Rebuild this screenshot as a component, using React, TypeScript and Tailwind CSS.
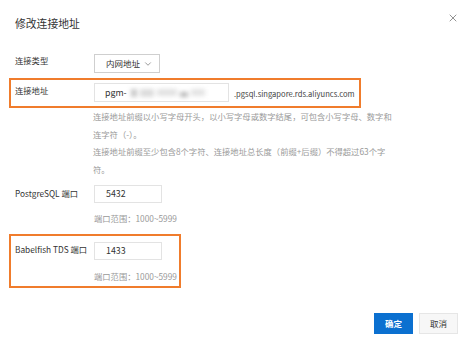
import { ChevronDown, X } from 'lucide-react';

const font = { fontFamily: '"Noto Sans CJK SC", "Noto Sans", sans-serif' };

function Field({ value, className = '' }: { value: string; className?: string }) {
  return (
    <div className={`flex h-[18px] w-[68px] items-center border border-[#e3e3e3] pl-[11px] text-[8.8px] text-[#333] ${className}`}>
      {value}
    </div>
  );
}

export default function App() {
  return (
    <div className="relative h-[350px] w-[474px] overflow-hidden bg-white" style={font}>
      <div className="pl-[15px] pt-[17px]">
        <h1 className="text-[10.8px] leading-[13px] text-[#333]">修改连接地址</h1>
      </div>
      <button type="button" className="absolute left-[447px] top-[12px] text-[#777]">
        <X size={12} strokeWidth={1.6} />
      </button>

      <div className="mt-[24px] flex items-start pl-[15px]">
        <span className="w-[79px] text-[8.3px] leading-[12px] text-[#333]">连接类型</span>
        <div className="flex h-[19px] w-[66px] items-center justify-between border border-[#cfcfcf] pl-[11px] pr-[6px] text-[8.5px] text-[#333]">
          内网地址
          <ChevronDown size={10} strokeWidth={1.4} className="text-[#555]" />
        </div>
      </div>

      <div className="ml-[9px] mt-[5px] flex h-[30px] w-[352px] items-start border-2 border-[#f07c2c] pl-[4px] pt-[3px]">
        <span className="w-[79px] shrink-0 pt-[1px] text-[8.3px] leading-[12px] text-[#333]">连接地址</span>
        <div className="flex h-[19px] w-[135px] shrink-0 items-center border border-[#e3e3e3] pl-[10px] text-[8.8px] text-[#333]">
          pgm-
          <span className="ml-[4px] flex items-center gap-[3px] blur-[2px]">
            <span className="h-[8px] w-[6px] bg-[#c8c8c8]" />
            <span className="h-[8px] w-[14px] bg-[#dcdcdc]" />
            <span className="h-[7px] w-[20px] bg-[#e2e2e2]" />
            <span className="h-[5px] w-[8px] translate-y-[2px] bg-[#b8b8b8]" />
            <span className="h-[7px] w-[14px] bg-[#e4e4e4]" />
          </span>
        </div>
        <span className="ml-[5px] self-center whitespace-nowrap pb-[2px] text-[7.6px] text-[#444]">
          .pgsql.singapore.rds.aliyuncs.com
        </span>
      </div>

      <div className="whitespace-nowrap pl-[93px] text-[8.3px] leading-[17.5px] text-[#999]">
        <p>
          连接地址前缀以小写字母开头，以小写字母或数字结尾，可包含小写字母、数字和
          <br />
          连字符（-）。
        </p>
        <p>
          连接地址前缀至少包含8个字符、连接地址总长度（前缀+后缀）不得超过63个字
          <br />
          符。
        </p>
      </div>

      <div className="mt-[7px] flex items-start pl-[15px]">
        <span className="w-[79px] pt-[2px] text-[8.3px] leading-[12px] text-[#333]">PostgreSQL 端口</span>
        <Field value="5432" />
      </div>
      <p className="mt-[8px] whitespace-nowrap pl-[94px] text-[8.3px] leading-[14px] text-[#999]">端口范围：1000~5999</p>

      <div className="ml-[9px] mt-[9px] h-[54px] w-[172px] border-2 border-[#f07c2c] pl-[4px] pt-[6px]">
        <div className="flex items-start">
          <span className="w-[79px] whitespace-nowrap pt-[1px] text-[8.3px] leading-[12px] text-[#333]">Babelfish TDS 端口</span>
          <Field value="1433" />
        </div>
        <p className="mt-[9px] whitespace-nowrap pl-[79px] text-[8.3px] leading-[14px] text-[#999]">端口范围：1000~5999</p>
      </div>

      <div className="mt-[25px] flex justify-end gap-[6px] pr-[16px]">
        <button type="button" className="h-[21px] w-[39px] bg-[#0b70d0] text-[8.5px] font-semibold text-white">
          确定
        </button>
        <button type="button" className="h-[21px] w-[39px] border border-[#e6e6e6] bg-[#f7f7f7] text-[8.5px] text-[#333]">
          取消
        </button>
      </div>
    </div>
  );
}
